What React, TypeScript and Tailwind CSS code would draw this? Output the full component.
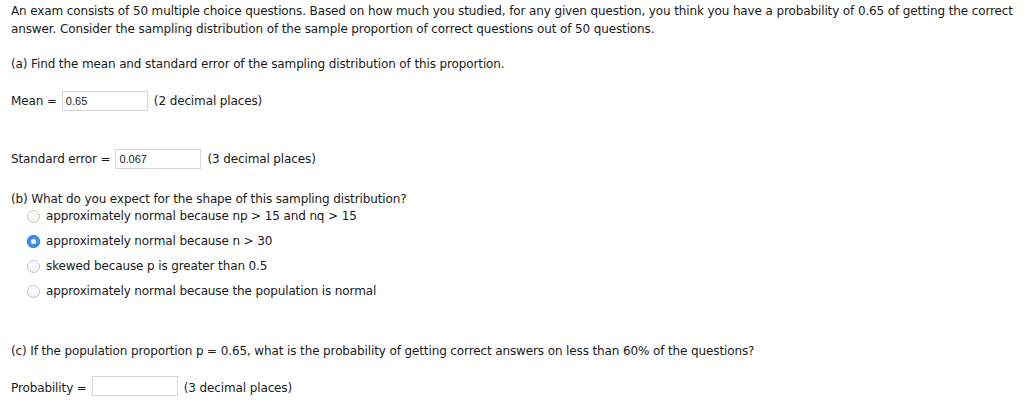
const font = { fontFamily: '"DejaVu Sans", Verdana, sans-serif' };

function Answer({ value }: { value: string }) {
  return (
    <span className="inline-flex h-[20px] w-[86px] items-center border border-[#d6d6d6] bg-white px-[3px] text-[11px] tracking-normal text-[#222] font-['Liberation_Sans',Arial,sans-serif]">
      {value}
    </span>
  );
}

function Radio({ checked, label }: { checked?: boolean; label: string }) {
  return (
    <div className="flex h-[18px] items-center pl-[16px]">
      {checked ? (
        <span className="flex h-[13px] w-[13px] items-center justify-center rounded-full bg-[#3d8ff5] shadow-[inset_0_0_0_1px_#2f7fe0]">
          <span className="h-[5px] w-[5px] rounded-full bg-white" />
        </span>
      ) : (
        <span className="h-[13px] w-[13px] rounded-full border border-[#c4c4c4] bg-gradient-to-b from-white to-[#f2f2f2]" />
      )}
      <span className="ml-[6px]">{label}</span>
    </div>
  );
}

export default function App() {
  return (
    <div
      className="h-[407px] w-[1024px] overflow-hidden bg-white pl-[11px] pr-[8px] pt-[2px] text-[12px] leading-[18px] tracking-[-0.12px] text-[#1a1a1a]"
      style={font}
    >
      <p>
        An exam consists of 50 multiple choice questions. Based on how much you studied, for any given question, you think you have a probability of 0.65 of getting the correct answer. Consider the sampling distribution of the sample proportion of correct questions out of 50 questions.
      </p>

      <p className="mt-[17px]">(a) Find the mean and standard error of the sampling distribution of this proportion.</p>

      <div className="mt-[18px] flex h-[20px] items-center">
        <span>Mean =</span>
        <span className="ml-[5px]"><Answer value="0.65" /></span>
        <span className="ml-[6px]">(2 decimal places)</span>
      </div>

      <div className="mt-[38px] flex h-[20px] items-center">
        <span>Standard error =</span>
        <span className="ml-[5px]"><Answer value="0.067" /></span>
        <span className="ml-[6px]">(3 decimal places)</span>
      </div>

      <p className="mt-[21px]">(b) What do you expect for the shape of this sampling distribution?</p>
      <div className="-mt-[1px] flex flex-col gap-[7px]">
        <Radio label="approximately normal because np > 15 and nq > 15" />
        <Radio checked label="approximately normal because n > 30" />
        <Radio label="skewed because p is greater than 0.5" />
        <Radio label="approximately normal because the population is normal" />
      </div>

      <p className="mt-[42px]">
        (c) If the population proportion p = 0.65, what is the probability of getting correct answers on less than 60% of the questions?
      </p>

      <div className="mt-[18px] flex h-[20px] items-center">
        <span>Probability =</span>
        <span className="ml-[5px]"><Answer value="" /></span>
        <span className="ml-[6px]">(3 decimal places)</span>
      </div>
    </div>
  );
}
